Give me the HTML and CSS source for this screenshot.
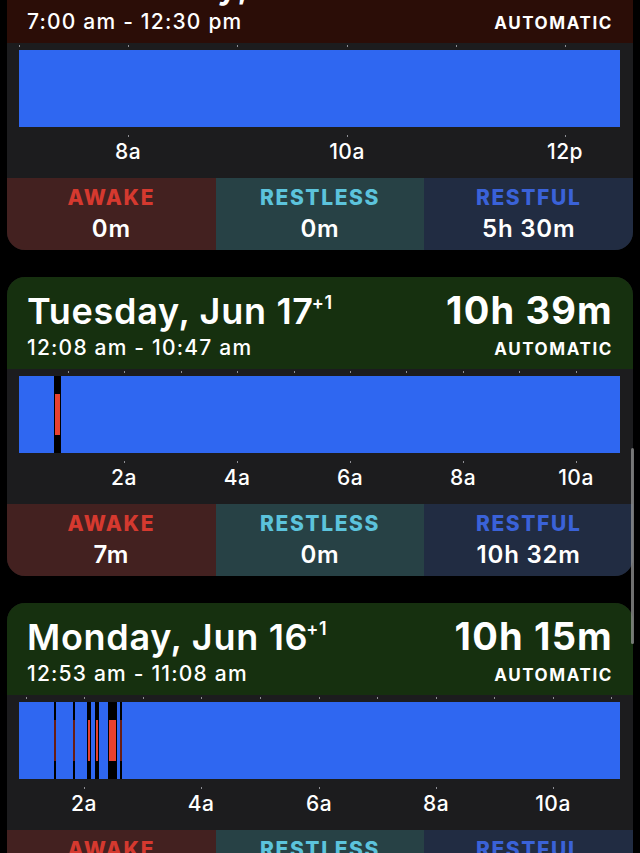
FILE: index.html
```html
<!DOCTYPE html>
<html lang="en">
<head>
  <meta charset="UTF-8">
  <meta name="viewport" content="width=device-width, initial-scale=1.0">
  <title>Sleep History</title>
  <link rel="stylesheet" href="styles.css">
</head>
<body>
  <div class="feed">

    <div class="night">
      <div class="night-head head-red">
        <div class="head-row">
          <span class="day">Wednesday, Jun 18</span>
          <span class="total">5h 30m</span>
        </div>
        <div class="head-row sub">
          <span class="range">7:00 am - 12:30 pm</span>
          <span class="source">AUTOMATIC</span>
        </div>
      </div>
      <div class="chart">
        <div class="plot">
          <span class="tick-top" style="left: 0px"></span>
          <span class="tick-top" style="left: 109px"></span>
          <span class="tick-top" style="left: 218px"></span>
          <span class="tick-top" style="left: 328px"></span>
          <span class="tick-top" style="left: 437px"></span>
          <span class="tick-top" style="left: 546px"></span>
          <div class="bar"></div>
        </div>
        <div class="axis">
          <span class="tick" style="left: 109px"></span>
          <span class="tick" style="left: 328px"></span>
          <span class="tick" style="left: 546px"></span>
          <span class="hour" style="left: 109px">8a</span>
          <span class="hour" style="left: 328px">10a</span>
          <span class="hour" style="left: 546px">12p</span>
        </div>
      </div>
      <div class="stats">
        <div class="stat stat-awake"><div class="stat-name">AWAKE</div><div class="stat-value">0m</div></div>
        <div class="stat stat-restless"><div class="stat-name">RESTLESS</div><div class="stat-value">0m</div></div>
        <div class="stat stat-restful"><div class="stat-name">RESTFUL</div><div class="stat-value">5h 30m</div></div>
      </div>
    </div>

    <div class="night">
      <div class="night-head head-green">
        <div class="head-row">
          <span class="day">Tuesday, Jun 17<sup>+1</sup></span>
          <span class="total">10h 39m</span>
        </div>
        <div class="head-row sub">
          <span class="range">12:08 am - 10:47 am</span>
          <span class="source">AUTOMATIC</span>
        </div>
      </div>
      <div class="chart">
        <div class="plot">
          <span class="tick-top" style="left: 49px"></span>
          <span class="tick-top" style="left: 105px"></span>
          <span class="tick-top" style="left: 162px"></span>
          <span class="tick-top" style="left: 218px"></span>
          <span class="tick-top" style="left: 275px"></span>
          <span class="tick-top" style="left: 331px"></span>
          <span class="tick-top" style="left: 387px"></span>
          <span class="tick-top" style="left: 444px"></span>
          <span class="tick-top" style="left: 500px"></span>
          <span class="tick-top" style="left: 557px"></span>
          <div class="bar">
            <span class="wake" style="left: 35px; width: 7px"></span>
          </div>
        </div>
        <div class="axis">
          <span class="tick" style="left: 105px"></span>
          <span class="tick" style="left: 218px"></span>
          <span class="tick" style="left: 331px"></span>
          <span class="tick" style="left: 444px"></span>
          <span class="tick" style="left: 557px"></span>
          <span class="hour" style="left: 105px">2a</span>
          <span class="hour" style="left: 218px">4a</span>
          <span class="hour" style="left: 331px">6a</span>
          <span class="hour" style="left: 444px">8a</span>
          <span class="hour" style="left: 557px">10a</span>
        </div>
      </div>
      <div class="stats">
        <div class="stat stat-awake"><div class="stat-name">AWAKE</div><div class="stat-value">7m</div></div>
        <div class="stat stat-restless"><div class="stat-name">RESTLESS</div><div class="stat-value">0m</div></div>
        <div class="stat stat-restful"><div class="stat-name">RESTFUL</div><div class="stat-value">10h 32m</div></div>
      </div>
    </div>

    <div class="night">
      <div class="night-head head-green">
        <div class="head-row">
          <span class="day">Monday, Jun 16<sup>+1</sup></span>
          <span class="total">10h 15m</span>
        </div>
        <div class="head-row sub">
          <span class="range">12:53 am - 11:08 am</span>
          <span class="source">AUTOMATIC</span>
        </div>
      </div>
      <div class="chart">
        <div class="plot">
          <span class="tick-top" style="left: 7px"></span>
          <span class="tick-top" style="left: 65px"></span>
          <span class="tick-top" style="left: 124px"></span>
          <span class="tick-top" style="left: 182px"></span>
          <span class="tick-top" style="left: 241px"></span>
          <span class="tick-top" style="left: 300px"></span>
          <span class="tick-top" style="left: 358px"></span>
          <span class="tick-top" style="left: 417px"></span>
          <span class="tick-top" style="left: 475px"></span>
          <span class="tick-top" style="left: 534px"></span>
          <span class="tick-top" style="left: 592px"></span>
          <div class="bar">
            <span class="wake thin" style="left: 35px; width: 2px"></span>
            <span class="wake thin" style="left: 54px; width: 2px"></span>
            <span class="wake" style="left: 68px; width: 4px"></span>
            <span class="wake" style="left: 76px; width: 4px"></span>
            <span class="wake" style="left: 89px; width: 9px"></span>
            <span class="wake thin" style="left: 101px; width: 2px"></span>
          </div>
        </div>
        <div class="axis">
          <span class="tick" style="left: 65px"></span>
          <span class="tick" style="left: 182px"></span>
          <span class="tick" style="left: 300px"></span>
          <span class="tick" style="left: 417px"></span>
          <span class="tick" style="left: 534px"></span>
          <span class="hour" style="left: 65px">2a</span>
          <span class="hour" style="left: 182px">4a</span>
          <span class="hour" style="left: 300px">6a</span>
          <span class="hour" style="left: 417px">8a</span>
          <span class="hour" style="left: 534px">10a</span>
        </div>
      </div>
      <div class="stats">
        <div class="stat stat-awake"><div class="stat-name">AWAKE</div><div class="stat-value">21m</div></div>
        <div class="stat stat-restless"><div class="stat-name">RESTLESS</div><div class="stat-value">0m</div></div>
        <div class="stat stat-restful"><div class="stat-name">RESTFUL</div><div class="stat-value">9h 54m</div></div>
      </div>
    </div>

  </div>

  <div class="scroll-thumb"></div>
</body>
</html>
```

FILE: styles.css
```css
body {
  margin: 0;
  background: #000;
  color: #fff;
  font-family: Inter, "Noto Sans", sans-serif;
}
.feed {
  margin-top: -49px;
  padding: 0 7px;
  display: flex;
  flex-direction: column;
  gap: 27px;
}
.night {
  border-radius: 18px;
  overflow: hidden;
  background: #1c1c1e;
}
.night-head {
  height: 92px;
  box-sizing: border-box;
  padding: 13px 21px 0 20px;
}
.head-red {
  background: #2b0d07;
}
.head-green {
  background: #16300f;
}
.head-row {
  display: flex;
  justify-content: space-between;
  align-items: baseline;
  height: 40px;
  line-height: 40px;
}
.head-row.sub {
  margin-top: 6px;
  height: 24px;
  line-height: 24px;
}
.day {
  font-size: 36px;
  font-weight: 600;
  letter-spacing: 0.7px;
}
.day sup {
  font-size: 18px;
  font-weight: 600;
  line-height: 0;
  vertical-align: 15px;
  margin-left: -2px;
  letter-spacing: 0.5px;
}
.total {
  font-size: 38px;
  font-weight: 700;
  letter-spacing: 1.2px;
  margin-right: -1px;
}
.range {
  font-size: 21px;
  font-weight: 500;
  letter-spacing: 1.2px;
}
.source {
  font-size: 17px;
  font-weight: 700;
  letter-spacing: 1.6px;
  margin-right: -1px;
}
.chart {
  height: 135px;
  padding: 7px 13px 0 12px;
  box-sizing: border-box;
}
.plot {
  position: relative;
}
.tick-top {
  position: absolute;
  top: -5px;
  width: 1px;
  height: 2px;
  background: #8e8e93;
}
.bar {
  position: relative;
  height: 77px;
  background: #2f67f1;
}
.wake {
  position: absolute;
  top: 0;
  bottom: 0;
  background: #000;
}
.wake::after {
  content: "";
  position: absolute;
  top: 24%;
  bottom: 24%;
  left: 1px;
  right: 1px;
  background: #e8412f;
}
.wake.thin::after {
  left: 0;
  right: 0;
  opacity: 0.45;
}
.axis {
  position: relative;
  height: 51px;
}
.tick {
  position: absolute;
  top: 8px;
  width: 1px;
  height: 2px;
  background: #8e8e93;
}
.hour {
  position: absolute;
  top: 14px;
  line-height: 22px;
  font-size: 21px;
  font-weight: 500;
  letter-spacing: 0.5px;
  transform: translateX(-50%);
  white-space: nowrap;
}
.stats {
  display: grid;
  grid-template-columns: 1fr 1fr 1fr;
}
.stat {
  padding: 9px 0 7px;
  text-align: center;
}
.stat-name {
  font-size: 21px;
  line-height: 22px;
  font-weight: 800;
  letter-spacing: 1.6px;
}
.stat-value {
  margin-top: 6px;
  font-size: 24px;
  line-height: 28px;
  font-weight: 600;
  letter-spacing: 0.8px;
}
.stat-awake {
  background: #432120;
}
.stat-awake .stat-name {
  color: #d5392f;
}
.stat-restless {
  background: #274145;
}
.stat-restless .stat-name {
  color: #5cc3dc;
}
.stat-restful {
  background: #212c42;
}
.stat-restful .stat-name {
  color: #3a62d8;
}
.scroll-thumb {
  position: fixed;
  top: 448px;
  right: 6px;
  width: 3px;
  height: 196px;
  border-radius: 2px;
  background: rgba(150, 150, 150, 0.75);
}
```
